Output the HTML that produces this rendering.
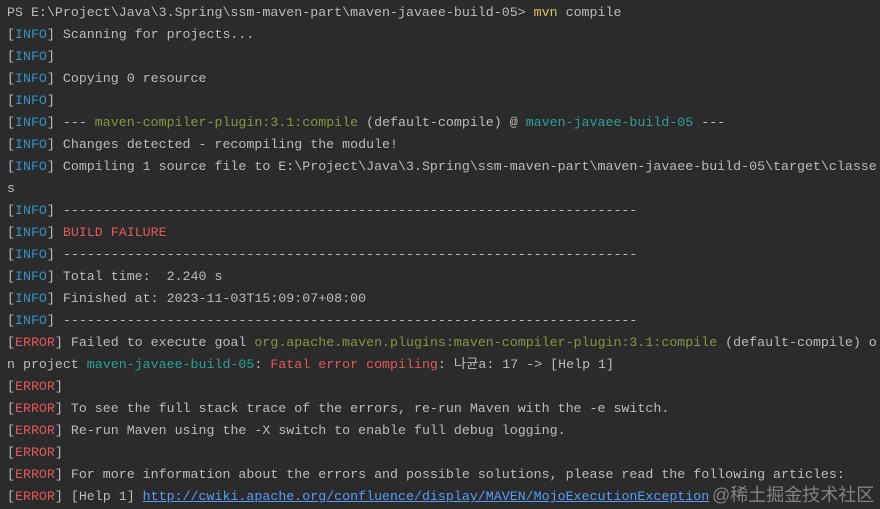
<!DOCTYPE html>
<html><head><meta charset="utf-8"><style>
html,body{margin:0;padding:0;background:#2b2b2b;width:880px;height:509px;overflow:hidden}
pre{margin:0;padding:2px 0 0 7px;font-family:"Liberation Mono","DejaVu Sans Mono","Noto Sans CJK KR",monospace;font-size:13.3px;line-height:22px;color:#bbbbbb;white-space:pre}
.b{color:#3592c4}.g{color:#7f9a3f}.c{color:#2aa198}.r{color:#e0585a}.y{color:#d9c55f}
.l{color:#589df6;text-decoration:underline}
.wm{position:absolute;left:712px;top:481px;font-family:"Liberation Sans","Noto Sans CJK SC",sans-serif;font-size:18px;color:rgba(200,200,200,0.55)}
</style></head><body><pre>PS E:\Project\Java\3.Spring\ssm-maven-part\maven-javaee-build-05&gt; <span class="y">mvn</span> compile
[<span class="b">INFO</span>] Scanning for projects...
[<span class="b">INFO</span>]
[<span class="b">INFO</span>] Copying 0 resource
[<span class="b">INFO</span>]
[<span class="b">INFO</span>] --- <span class="g">maven-compiler-plugin:3.1:compile</span> (default-compile) @ <span class="c">maven-javaee-build-05</span> ---
[<span class="b">INFO</span>] Changes detected - recompiling the module!
[<span class="b">INFO</span>] Compiling 1 source file to E:\Project\Java\3.Spring\ssm-maven-part\maven-javaee-build-05\target\classe
s
[<span class="b">INFO</span>] ------------------------------------------------------------------------
[<span class="b">INFO</span>] <span class="r">BUILD FAILURE</span>
[<span class="b">INFO</span>] ------------------------------------------------------------------------
[<span class="b">INFO</span>] Total time:  2.240 s
[<span class="b">INFO</span>] Finished at: 2023-11-03T15:09:07+08:00
[<span class="b">INFO</span>] ------------------------------------------------------------------------
[<span class="r">ERROR</span>] Failed to execute goal <span class="g">org.apache.maven.plugins:maven-compiler-plugin:3.1:compile</span> (default-compile) o
n project <span class="c">maven-javaee-build-05</span>: <span class="r">Fatal error compiling</span>: 나균a: 17 -&gt; [Help 1]
[<span class="r">ERROR</span>]
[<span class="r">ERROR</span>] To see the full stack trace of the errors, re-run Maven with the -e switch.
[<span class="r">ERROR</span>] Re-run Maven using the -X switch to enable full debug logging.
[<span class="r">ERROR</span>]
[<span class="r">ERROR</span>] For more information about the errors and possible solutions, please read the following articles:
[<span class="r">ERROR</span>] [Help 1] <span class="l">http://cwiki.apache.org/confluence/display/MAVEN/MojoExecutionException</span></pre>
<div class="wm">@稀土掘金技术社区</div>
</body></html>
